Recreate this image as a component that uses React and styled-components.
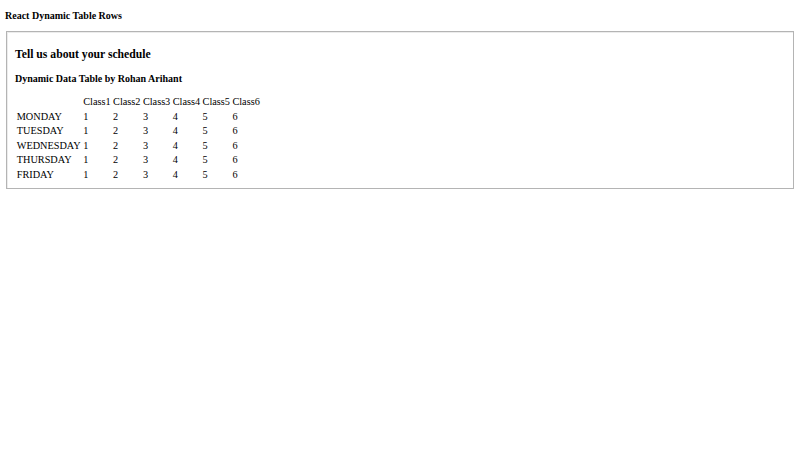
import React from "react";
import styled, { createGlobalStyle } from "styled-components";

const days = ["MONDAY", "TUESDAY", "WEDNESDAY", "THURSDAY", "FRIDAY"];
const classes = ["Class1", "Class2", "Class3", "Class4", "Class5", "Class6"];

const GlobalStyle = createGlobalStyle`
  body {
    margin: 0;
    background: #ffffff;
    color: #000000;
    font-family: "Liberation Serif", "Times New Roman", serif;
  }
`;

const Page = styled.div`
  padding: 9.5px 5px 0;
`;

const PageTitle = styled.h4`
  margin: 0 0 9.5px;
  font-size: 10px;
  line-height: 12px;
  font-weight: bold;
`;

const ScheduleBox = styled.fieldset`
  margin: 0 1px;
  padding: 4px 8px 6px;
  border: 1px solid #b4b4b4;
  box-shadow: inset 1px 1px 0 #ececec;
`;

const Heading = styled.h3`
  margin: 12px 0 0;
  font-size: 11.7px;
  line-height: 13.5px;
  font-weight: bold;
`;

const SubHeading = styled.h4`
  margin: 11.8px 0 0;
  font-size: 10px;
  line-height: 11.5px;
  font-weight: bold;
`;

const Table = styled.table`
  margin-top: 10px;
  border-collapse: separate;
  border-spacing: 1.5px 0;
  font-size: 10.25px;
`;

const Row = styled.tr`
  height: 14.5px;
`;

const Cell = styled.td`
  padding: 0 0.75px;
  text-align: left;
  vertical-align: middle;
  line-height: 11.5px;
`;

const HeadCell = styled.th`
  padding: 0 0.75px;
  font-weight: normal;
  text-align: left;
  vertical-align: middle;
  line-height: 11.5px;
`;

function App() {
  return (
    <Page>
      <GlobalStyle />
      <PageTitle>React Dynamic Table Rows</PageTitle>
      <ScheduleBox>
        <Heading>Tell us about your schedule</Heading>
        <SubHeading>Dynamic Data Table by Rohan Arihant</SubHeading>
        <Table>
          <thead>
            <Row>
              <HeadCell />
              {classes.map((c) => (
                <HeadCell key={c}>{c}</HeadCell>
              ))}
            </Row>
          </thead>
          <tbody>
            {days.map((d) => (
              <Row key={d}>
                <Cell>{d}</Cell>
                {classes.map((c, i) => (
                  <Cell key={c}>{i + 1}</Cell>
                ))}
              </Row>
            ))}
          </tbody>
        </Table>
      </ScheduleBox>
    </Page>
  );
}

export default App;
